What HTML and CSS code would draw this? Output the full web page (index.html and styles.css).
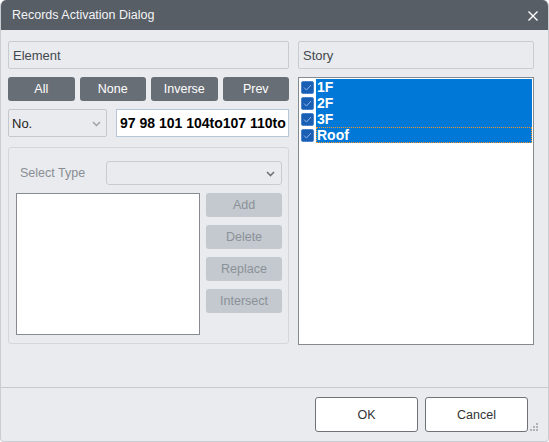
FILE: index.html
```html
<!DOCTYPE html>
<html>
<head>
<meta charset="utf-8">
<link rel="stylesheet" href="styles.css">
</head>
<body>
<div class="window">
  <div class="titlebar">
    <span class="title">Records Activation Dialog</span>
    <svg class="close" width="10" height="10" viewBox="0 0 10 10"><path d="M0.5 0.5 L9.5 9.5 M9.5 0.5 L0.5 9.5" stroke="#ffffff" stroke-width="1.4" fill="none"/></svg>
  </div>
  <div class="content">
    <div class="col">
      <div class="header">Element</div>
      <div class="btn-row">
        <button class="dark-btn">All</button>
        <button class="dark-btn">None</button>
        <button class="dark-btn">Inverse</button>
        <button class="dark-btn">Prev</button>
      </div>
      <div class="filter-row">
        <div class="combo">
          <span>No.</span>
          <svg width="9" height="6" viewBox="0 0 9 6"><path d="M1 1 L4.5 4.5 L8 1" stroke="#9ea2a8" stroke-width="1.5" fill="none"/></svg>
        </div>
        <div class="text-field">97 98 101 104to107 110to</div>
      </div>
      <div class="group">
        <div class="type-row">
          <span class="type-label">Select Type</span>
          <div class="combo disabled">
            <span></span>
            <svg width="9" height="6" viewBox="0 0 9 6"><path d="M1 1 L4.5 4.5 L8 1" stroke="#6f737a" stroke-width="1.6" fill="none"/></svg>
          </div>
        </div>
        <div class="group-body">
          <div class="listbox"></div>
          <div class="side-btns">
            <button class="gray-btn">Add</button>
            <button class="gray-btn">Delete</button>
            <button class="gray-btn">Replace</button>
            <button class="gray-btn">Intersect</button>
          </div>
        </div>
      </div>
    </div>
    <div class="col">
      <div class="header">Story</div>
      <div class="story-list">
        <div class="item"><span class="check"><svg width="9" height="7" viewBox="0 0 9 7"><path d="M1 3.5 L3.5 6 L8 1" stroke="#8fb6e6" stroke-width="1" fill="none"/></svg></span><span class="label">1F</span></div>
        <div class="item"><span class="check"><svg width="9" height="7" viewBox="0 0 9 7"><path d="M1 3.5 L3.5 6 L8 1" stroke="#8fb6e6" stroke-width="1" fill="none"/></svg></span><span class="label">2F</span></div>
        <div class="item"><span class="check"><svg width="9" height="7" viewBox="0 0 9 7"><path d="M1 3.5 L3.5 6 L8 1" stroke="#8fb6e6" stroke-width="1" fill="none"/></svg></span><span class="label">3F</span></div>
        <div class="item"><span class="check"><svg width="9" height="7" viewBox="0 0 9 7"><path d="M1 3.5 L3.5 6 L8 1" stroke="#8fb6e6" stroke-width="1" fill="none"/></svg></span><span class="label focused">Roof</span></div>
      </div>
    </div>
  </div>
  <div class="footer">
    <button class="white-btn">OK</button>
    <button class="white-btn">Cancel</button>
  </div>
  <div class="grip">
    <span class="dot d1"></span>
    <span class="dot d2"></span><span class="dot d3"></span>
    <span class="dot d4"></span><span class="dot d5"></span><span class="dot d6"></span>
  </div>
</div>
</body>
</html>
```

FILE: styles.css
```css
* { box-sizing: border-box; }
html, body { margin: 0; padding: 0; background: #ffffff; }
body { font-family: "Liberation Sans", Arial, sans-serif; font-size: 12.5px; }

.window {
  position: relative;
  width: 549px;
  height: 442px;
  background: #e9ebee;
  border: 1px solid #c9cdd2;
  border-top: 0;
  border-radius: 6px 6px 4px 4px;
  overflow: hidden;
  display: flex;
  flex-direction: column;
}

.titlebar {
  height: 30px;
  flex: none;
  background: #585e66;
  color: #f3f4f6;
  display: flex;
  align-items: center;
  justify-content: space-between;
  padding: 0 10px 0 11px;
}
.title { font-size: 12.5px; }
.close { display: block; margin-top: 1px; }

.content {
  height: 357px;
  flex: none;
  padding: 11px 0 0 7px;
  display: grid;
  grid-template-columns: 281px 236px;
  column-gap: 9px;
  align-items: start;
}
.col { display: flex; flex-direction: column; }

.header {
  height: 28px;
  border: 1px solid #c8ccd1;
  border-radius: 2px;
  display: flex;
  align-items: center;
  padding-left: 4px;
  color: #44484e;
  font-size: 13px;
}

.btn-row {
  margin-top: 8px;
  height: 24px;
  display: grid;
  grid-template-columns: repeat(4, 1fr);
  column-gap: 5px;
}
button {
  font-family: "Liberation Sans", Arial, sans-serif;
  font-size: 12.5px;
  margin: 0;
  padding: 0;
}
.dark-btn {
  background: #686e76;
  color: #ffffff;
  border: 0;
  border-radius: 3px;
}

.filter-row {
  margin-top: 8px;
  height: 28px;
  display: flex;
  gap: 9px;
}
.combo {
  width: 99px;
  border: 1px solid #c4c8cd;
  border-radius: 2px;
  display: flex;
  align-items: center;
  justify-content: space-between;
  padding: 0 5px 0 3px;
  color: #222222;
  font-size: 13px;
}
.combo svg { display: block; margin-top: 2px; }
.text-field {
  flex: 1;
  background: #ffffff;
  border: 1px solid #b7c7d8;
  display: flex;
  align-items: center;
  padding-left: 3px;
  font-weight: bold;
  font-size: 14px;
  color: #000000;
  white-space: nowrap;
  overflow: hidden;
}

.group {
  margin-top: 10px;
  height: 197px;
  border: 1px solid #d3d7db;
  border-radius: 3px;
  padding: 13px 6px 8px 7px;
}
.type-row {
  height: 24px;
  display: flex;
  align-items: center;
}
.type-label {
  width: 90px;
  padding-left: 4px;
  color: #8a8e94;
}
.combo.disabled {
  flex: 1;
  height: 24px;
  border-color: #c8ccd1;
  border-radius: 3px;
  padding-right: 6px;
}

.group-body {
  margin-top: 8px;
  display: flex;
  gap: 6px;
}
.listbox {
  width: 184px;
  height: 142px;
  background: #ffffff;
  border: 1px solid #878b91;
}
.side-btns {
  width: 76px;
  display: flex;
  flex-direction: column;
  gap: 8px;
}
.gray-btn {
  height: 24px;
  background: #c3c9cf;
  color: #8b9198;
  border: 0;
  border-radius: 3px;
}

.story-list {
  margin-top: 8px;
  height: 268px;
  background: #ffffff;
  border: 1px solid #858990;
  padding: 1px 1px 0 2px;
}
.item {
  height: 16px;
  display: flex;
  align-items: center;
}
.check {
  width: 13px;
  height: 13px;
  background: #1a5fb3;
  border: 1px solid #4a84cc;
  border-radius: 2px;
  display: flex;
  align-items: center;
  justify-content: center;
  margin-right: 2px;
}
.check svg { display: block; }
.label {
  flex: 1;
  height: 16px;
  background: #0078d7;
  color: #ffffff;
  font-weight: bold;
  font-size: 14px;
  line-height: 16px;
  padding-left: 1px;
}
.label.focused {
  outline: 1px dotted #f0962c;
  outline-offset: -1px;
}

.footer {
  flex: 1;
  border-top: 1px solid #c6cacf;
  display: flex;
  justify-content: flex-end;
  align-items: flex-start;
  gap: 7px;
  padding: 9px 20px 0 0;
}
.white-btn {
  width: 103px;
  height: 35px;
  background: #ffffff;
  color: #333333;
  border: 1px solid #6f7378;
  border-radius: 3px;
}

.grip {
  position: absolute;
  right: 10px;
  bottom: 9px;
  width: 9px;
  height: 9px;
}
.dot {
  position: absolute;
  width: 2px;
  height: 2px;
  background: #aeb2b7;
}
.d1 { right: 0; top: 0; }
.d2 { right: 3px; top: 3px; }
.d3 { right: 0; top: 3px; }
.d4 { right: 6px; top: 6px; }
.d5 { right: 3px; top: 6px; }
.d6 { right: 0; top: 6px; }
```
